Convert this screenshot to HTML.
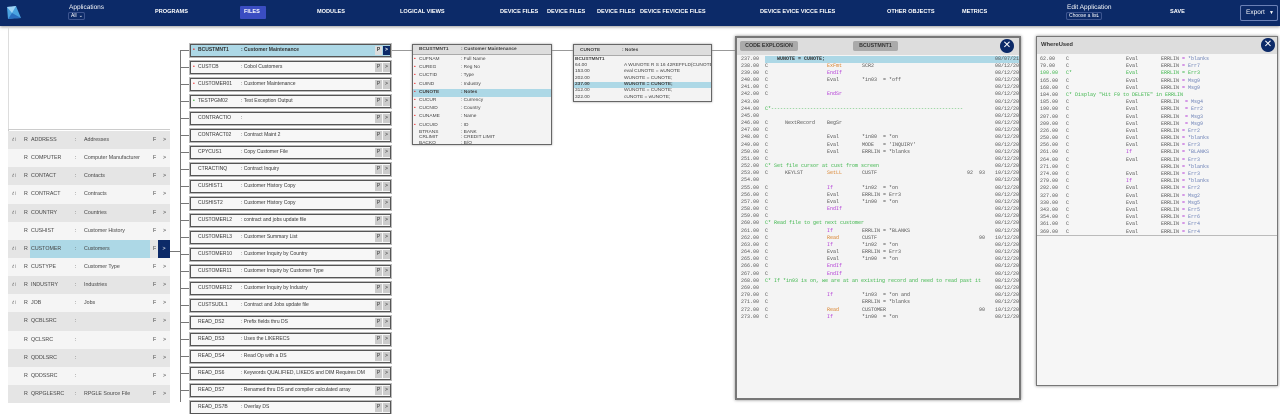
<!DOCTYPE html>
<html><head><meta charset="utf-8"><style>
*{margin:0;padding:0;box-sizing:border-box}
body{width:1280px;height:402px;overflow:hidden;background:#fff;font-family:"Liberation Sans",sans-serif;position:relative;color:#333}
.a{position:absolute}
#nav{left:0;top:0;width:1280px;height:26px;background:#0c2a68;box-shadow:0 1px 3px rgba(0,0,0,.4)}
.ni{position:absolute;top:9px;color:#fff;font-size:5.6px;font-weight:bold;white-space:nowrap}
.sel{position:absolute;border:1px solid #3d5590;border-radius:2px;color:#fff;font-size:5px;height:8px;line-height:7px;padding-left:2px}
.lt{left:8px;width:162px;height:18.14px;font-size:5.3px;line-height:18px;color:#444}
.lt span{position:absolute}
.bx{left:190px;width:201px;height:13px;border:1px solid #555;box-shadow:0 0 0 1px #bbb;background:#f7f7f7;font-size:5px;line-height:11px;color:#333}
.bx span{position:absolute}
.pc{position:absolute;top:1px;width:7px;height:9px;background:#ccc;text-align:center;line-height:9px;font-size:5px}
.hl{position:absolute;left:181px;width:9px;height:1px;background:#777}
.fr{position:absolute;left:0;width:138px;height:8.2px;font-size:4.8px;line-height:8.2px;color:#444}
.fr span{position:absolute}
.code{font-family:"Liberation Mono",monospace;font-size:5px;color:#555}
.L{position:relative;height:7.18px;line-height:7.18px;white-space:nowrap;padding-left:4px}
.L i{display:inline-block;font-style:normal;vertical-align:top}
.L i:nth-of-type(1){width:24px}.L i:nth-of-type(2){width:20px}.L i:nth-of-type(3){width:42px}.L i:nth-of-type(4){width:35px}.L i:nth-of-type(5){width:105px}.L i:nth-of-type(6){width:28px}
.d{position:absolute;left:258px;top:0}
.W{position:relative;height:7.2px;line-height:7.2px;white-space:nowrap;padding-left:3px}
.W i{display:inline-block;font-style:normal;vertical-align:top}
.W i:nth-of-type(1){width:26px}.W i:nth-of-type(2){width:60px}.W i:nth-of-type(3){width:35px}
.o{color:#d9822b}.p{color:#b23ad6}.g{color:#3cb54a}.b{color:#6a7fb5}
b{font-weight:normal}
</style></head><body>
<div id="nav" class="a">
<svg class="a" style="left:6px;top:5px" width="16" height="15" viewBox="0 0 16 15"><path d="M1 2 L10 1 L15 13 L2 14 Z" fill="#4aa3e0"/><path d="M1 2 L10 1 L6 8 Z" fill="#9fd4f5"/><path d="M6 8 L15 13 L2 14 Z" fill="#2a6fc0"/></svg>
<div class="a" style="left:69px;top:4px;color:#fff;font-size:6.5px">Applications</div>
<div class="sel" style="left:68px;top:12px;width:17px">All <span style="position:absolute;right:1px">⌄</span></div>
<div class="ni" style="left:155px">PROGRAMS</div>
<div class="a" style="left:240px;top:6px;width:26px;height:13px;background:#3a4dc2;border-radius:1px"></div>
<div class="ni" style="left:244px">FILES</div>
<div class="ni" style="left:317px">MODULES</div>
<div class="ni" style="left:400px">LOGICAL VIEWS</div>
<div class="ni" style="left:500px">DEVICE FILES</div>
<div class="ni" style="left:547px">DEVICE FILES</div>
<div class="ni" style="left:597px">DEVICE FILES</div>
<div class="ni" style="left:640px">DEVICE FEVICICE FILES</div>
<div class="ni" style="left:760px">DEVICE EVICE VICCE FILES</div>
<div class="ni" style="left:887px">OTHER OBJECTS</div>
<div class="ni" style="left:962px">METRICS</div>
<div class="a" style="left:1067px;top:4px;color:#fff;font-size:6.5px">Edit Application</div>
<div class="sel" style="left:1066px;top:12px;width:36px">Choose a list <span style="position:absolute;right:1px">⌄</span></div>
<div class="ni" style="left:1170px">SAVE</div>
<div class="a" style="left:1240px;top:5px;width:38px;height:16px;border:1px solid #6b80b5;border-radius:2px;color:#fff;font-size:6.5px;line-height:14px;padding-left:5px">Export <span style="position:absolute;right:3px;font-size:5px">▼</span></div>
</div>
<div class="a" style="left:8px;top:28px;width:1px;height:374px;background:#ddd"></div>

<!-- left table -->
<div class="a" style="left:8px;top:129px;width:162px;height:273px;border-left:1px solid #ccc;border-top:1px solid #ccc"></div>
<div class="a lt" style="top:131px;background:#e5e5e5"><span style="left:4px">⛙</span><span style="left:16px">R</span><span style="left:23px">ADDRESS</span><span style="left:67px">:</span><span style="left:76px">Addresses</span><span style="left:145px">F</span><span style="left:155px">&gt;</span></div>
<div class="a lt" style="top:149.14px;background:#f5f5f5"><span style="left:16px">R</span><span style="left:23px">COMPUTER</span><span style="left:67px">:</span><span style="left:76px">Computer Manufacturer</span><span style="left:145px">F</span><span style="left:155px">&gt;</span></div>
<div class="a lt" style="top:167.28px;background:#e5e5e5"><span style="left:4px">⛙</span><span style="left:16px">R</span><span style="left:23px">CONTACT</span><span style="left:67px">:</span><span style="left:76px">Contacts</span><span style="left:145px">F</span><span style="left:155px">&gt;</span></div>
<div class="a lt" style="top:185.42px;background:#f5f5f5"><span style="left:4px">⛙</span><span style="left:16px">R</span><span style="left:23px">CONTRACT</span><span style="left:67px">:</span><span style="left:76px">Contracts</span><span style="left:145px">F</span><span style="left:155px">&gt;</span></div>
<div class="a lt" style="top:203.56px;background:#e5e5e5"><span style="left:4px">⛙</span><span style="left:16px">R</span><span style="left:23px">COUNTRY</span><span style="left:67px">:</span><span style="left:76px">Countries</span><span style="left:145px">F</span><span style="left:155px">&gt;</span></div>
<div class="a lt" style="top:221.7px;background:#f5f5f5"><span style="left:16px">R</span><span style="left:23px">CUSHIST</span><span style="left:67px">:</span><span style="left:76px">Customer History</span><span style="left:145px">F</span><span style="left:155px">&gt;</span></div>
<div class="a lt" style="top:239.84px;background:#e5e5e5"><span style="left:22px;width:120px;height:18px;background:#add8e6"></span><span style="left:4px">⛙</span><span style="left:16px">R</span><span style="left:23px">CUSTOMER</span><span style="left:67px">:</span><span style="left:76px">Customers</span><span style="left:145px">F</span><span style="left:150px;width:12px;height:18px;background:#0c2a68;color:#fff;text-align:center">&gt;</span></div>
<div class="a lt" style="top:257.98px;background:#f5f5f5"><span style="left:4px">⛙</span><span style="left:16px">R</span><span style="left:23px">CUSTYPE</span><span style="left:67px">:</span><span style="left:76px">Customer Type</span><span style="left:145px">F</span><span style="left:155px">&gt;</span></div>
<div class="a lt" style="top:276.12px;background:#e5e5e5"><span style="left:4px">⛙</span><span style="left:16px">R</span><span style="left:23px">INDUSTRY</span><span style="left:67px">:</span><span style="left:76px">Industries</span><span style="left:145px">F</span><span style="left:155px">&gt;</span></div>
<div class="a lt" style="top:294.26px;background:#f5f5f5"><span style="left:4px">⛙</span><span style="left:16px">R</span><span style="left:23px">JOB</span><span style="left:67px">:</span><span style="left:76px">Jobs</span><span style="left:145px">F</span><span style="left:155px">&gt;</span></div>
<div class="a lt" style="top:312.4px;background:#e5e5e5"><span style="left:16px">R</span><span style="left:23px">QCBLSRC</span><span style="left:67px">:</span><span style="left:145px">F</span><span style="left:155px">&gt;</span></div>
<div class="a lt" style="top:330.54px;background:#f5f5f5"><span style="left:16px">R</span><span style="left:23px">QCLSRC</span><span style="left:67px">:</span><span style="left:145px">F</span><span style="left:155px">&gt;</span></div>
<div class="a lt" style="top:348.68px;background:#e5e5e5"><span style="left:16px">R</span><span style="left:23px">QDDLSRC</span><span style="left:67px">:</span><span style="left:145px">F</span><span style="left:155px">&gt;</span></div>
<div class="a lt" style="top:366.82px;background:#f5f5f5"><span style="left:16px">R</span><span style="left:23px">QDDSSRC</span><span style="left:67px">:</span><span style="left:145px">F</span><span style="left:155px">&gt;</span></div>
<div class="a lt" style="top:384.96px;background:#e5e5e5"><span style="left:16px">R</span><span style="left:23px">QRPGLESRC</span><span style="left:67px">:</span><span style="left:76px">RPGLE Source File</span><span style="left:145px">F</span><span style="left:155px">&gt;</span></div>

<!-- tree lines -->
<div class="a" style="left:170px;top:251px;width:11px;height:1px;background:#777"></div>
<div class="a" style="left:180px;top:50px;width:1px;height:352px;background:#777"></div>
<div class="hl" style="top:50px"></div><div class="hl" style="top:67px"></div><div class="hl" style="top:84px"></div><div class="hl" style="top:101px"></div><div class="hl" style="top:118px"></div><div class="hl" style="top:135px"></div><div class="hl" style="top:152px"></div><div class="hl" style="top:169px"></div><div class="hl" style="top:186px"></div><div class="hl" style="top:203px"></div><div class="hl" style="top:220px"></div><div class="hl" style="top:237px"></div><div class="hl" style="top:254px"></div><div class="hl" style="top:271px"></div><div class="hl" style="top:288px"></div><div class="hl" style="top:305px"></div><div class="hl" style="top:322px"></div><div class="hl" style="top:339px"></div><div class="hl" style="top:356px"></div><div class="hl" style="top:373px"></div><div class="hl" style="top:390px"></div>
<div class="a" style="left:391px;top:50px;width:21px;height:1px;background:#999"></div>
<div class="a" style="left:552px;top:50px;width:21px;height:1px;background:#999"></div>
<div class="a" style="left:712px;top:50px;width:23px;height:1px;background:#999"></div>

<!-- middle boxes -->
<div class="a bx" style="top:44px;background:#add8e6;font-weight:bold"><span style="left:2px;color:#e22">•</span><span style="left:7px">BCUSTMNT1</span><span style="left:50px">: Customer Maintenance</span><span class="pc" style="left:184px;background:#ddd">P</span><span class="pc" style="left:192px;background:#0c2a68;color:#fff">&gt;</span></div>
<div class="a bx" style="top:61px"><span style="left:2px;color:#e22">•</span><span style="left:7px">CUSTCB</span><span style="left:50px">: Cobol Customers</span><span class="pc" style="left:184px">P</span><span class="pc" style="left:192px">&gt;</span></div>
<div class="a bx" style="top:78px"><span style="left:2px;color:#e22">•</span><span style="left:7px">CUSTOMER01</span><span style="left:50px">: Customer Maintenance</span><span class="pc" style="left:184px">P</span><span class="pc" style="left:192px">&gt;</span></div>
<div class="a bx" style="top:95px"><span style="left:2px;color:#2a2">•</span><span style="left:7px">TESTPGM02</span><span style="left:50px">: Test Exception Output</span><span class="pc" style="left:184px">P</span><span class="pc" style="left:192px">&gt;</span></div>
<div class="a bx" style="top:112px"><span style="left:7px">CONTRACTIO</span><span style="left:50px">:</span><span class="pc" style="left:184px">P</span><span class="pc" style="left:192px">&gt;</span></div>
<div class="a bx" style="top:129px"><span style="left:7px">CONTRACT02</span><span style="left:50px">: Contract Maint 2</span><span class="pc" style="left:184px">P</span><span class="pc" style="left:192px">&gt;</span></div>
<div class="a bx" style="top:146px"><span style="left:7px">CPYCUS1</span><span style="left:50px">: Copy Customer File</span><span class="pc" style="left:184px">P</span><span class="pc" style="left:192px">&gt;</span></div>
<div class="a bx" style="top:163px"><span style="left:7px">CTRACTINQ</span><span style="left:50px">: Contract Inquiry</span><span class="pc" style="left:184px">P</span><span class="pc" style="left:192px">&gt;</span></div>
<div class="a bx" style="top:180px"><span style="left:7px">CUSHIST1</span><span style="left:50px">: Customer History Copy</span><span class="pc" style="left:184px">P</span><span class="pc" style="left:192px">&gt;</span></div>
<div class="a bx" style="top:197px"><span style="left:7px">CUSHIST2</span><span style="left:50px">: Customer History Copy</span><span class="pc" style="left:184px">P</span><span class="pc" style="left:192px">&gt;</span></div>
<div class="a bx" style="top:214px"><span style="left:7px">CUSTOMERL2</span><span style="left:50px">: contract and jobs update file</span><span class="pc" style="left:184px">P</span><span class="pc" style="left:192px">&gt;</span></div>
<div class="a bx" style="top:231px"><span style="left:7px">CUSTOMERL3</span><span style="left:50px">: Customer Summary List</span><span class="pc" style="left:184px">P</span><span class="pc" style="left:192px">&gt;</span></div>
<div class="a bx" style="top:248px"><span style="left:7px">CUSTOMER10</span><span style="left:50px">: Customer Inquiry by Country</span><span class="pc" style="left:184px">P</span><span class="pc" style="left:192px">&gt;</span></div>
<div class="a bx" style="top:265px"><span style="left:7px">CUSTOMER11</span><span style="left:50px">: Customer Inquiry by Customer Type</span><span class="pc" style="left:184px">P</span><span class="pc" style="left:192px">&gt;</span></div>
<div class="a bx" style="top:282px"><span style="left:7px">CUSTOMER12</span><span style="left:50px">: Customer Inquiry by Industry</span><span class="pc" style="left:184px">P</span><span class="pc" style="left:192px">&gt;</span></div>
<div class="a bx" style="top:299px"><span style="left:7px">CUSTSUDL1</span><span style="left:50px">: Contract and Jobs update file</span><span class="pc" style="left:184px">P</span><span class="pc" style="left:192px">&gt;</span></div>
<div class="a bx" style="top:316px"><span style="left:7px">READ_DS2</span><span style="left:50px">: Prefix fields thru DS</span><span class="pc" style="left:184px">P</span><span class="pc" style="left:192px">&gt;</span></div>
<div class="a bx" style="top:333px"><span style="left:7px">READ_DS3</span><span style="left:50px">: Uses the LIKERECS</span><span class="pc" style="left:184px">P</span><span class="pc" style="left:192px">&gt;</span></div>
<div class="a bx" style="top:350px"><span style="left:7px">READ_DS4</span><span style="left:50px">: Read Op with a DS</span><span class="pc" style="left:184px">P</span><span class="pc" style="left:192px">&gt;</span></div>
<div class="a bx" style="top:367px"><span style="left:7px">READ_DS6</span><span style="left:50px">: Keywords QUALIFIED, LIKEDS and DIM Requires DM</span><span class="pc" style="left:184px">P</span><span class="pc" style="left:192px">&gt;</span></div>
<div class="a bx" style="top:384px"><span style="left:7px">READ_DS7</span><span style="left:50px">: Renamed thru DS and compiler calculated array</span><span class="pc" style="left:184px">P</span><span class="pc" style="left:192px">&gt;</span></div>
<div class="a bx" style="top:401px"><span style="left:7px">READ_DS7B</span><span style="left:50px">: Overlay DS</span><span class="pc" style="left:184px">P</span><span class="pc" style="left:192px">&gt;</span></div>

<!-- field panel -->
<div class="a" style="left:412px;top:44px;width:140px;height:101px;border:1px solid #666;background:#f3f3f3;overflow:hidden;box-shadow:0 0 2px #999">
<div class="fr" style="top:0;height:10px;line-height:10px;background:#ddd;font-weight:bold;border-bottom:1px solid #aaa"><span style="left:6px">BCUSTMNT1</span><span style="left:48px">: Customer Maintenance</span></div>
<div class="fr" style="top:11px"><span style="left:1px;color:#e22">•</span><span style="left:6px">CUFNAM</span><span style="left:48px">: Full Name</span></div>
<div class="fr" style="top:19.2px"><span style="left:1px;color:#e22">•</span><span style="left:6px">CUREG</span><span style="left:48px">: Reg No</span></div>
<div class="fr" style="top:27.4px"><span style="left:1px;color:#e22">•</span><span style="left:6px">CUCTID</span><span style="left:48px">: Type</span></div>
<div class="fr" style="top:35.6px"><span style="left:1px;color:#e22">•</span><span style="left:6px">CUIND</span><span style="left:48px">: Industry</span></div>
<div class="fr" style="top:43.8px;background:#add8e6;font-weight:bold"><span style="left:1px;color:#e22">•</span><span style="left:6px">CUNOTE</span><span style="left:48px">: Notes</span></div>
<div class="fr" style="top:52px"><span style="left:1px;color:#e22">•</span><span style="left:6px">CUCUR</span><span style="left:48px">: Currency</span></div>
<div class="fr" style="top:60.2px"><span style="left:1px;color:#e22">•</span><span style="left:6px">CUCNID</span><span style="left:48px">: Country</span></div>
<div class="fr" style="top:68.4px"><span style="left:1px;color:#e22">•</span><span style="left:6px">CUNAME</span><span style="left:48px">: Name</span></div>
<div class="fr" style="top:76.6px"><span style="left:1px;color:#e22">•</span><span style="left:6px">CUCUID</span><span style="left:48px">: ID</span></div>
<div class="fr" style="top:84.8px;line-height:6px"><span style="left:6px">BTRANS</span><span style="left:48px">: BANK</span></div>
<div class="fr" style="top:90px;line-height:6px"><span style="left:6px">CRLIMIT</span><span style="left:48px">: CREDIT LIMIT</span></div>
<div class="fr" style="top:95.5px;line-height:6px"><span style="left:6px">BACKO</span><span style="left:48px">: B/O</span></div>
</div>

<!-- notes panel -->
<div class="a" style="left:573px;top:44px;width:139px;height:58px;border:1px solid #666;background:#f3f3f3;overflow:hidden;box-shadow:0 0 2px #999">
<div class="fr" style="top:0;height:11px;line-height:11px;background:#ddd;font-weight:bold;border-bottom:1px solid #aaa"><span style="left:6px">CUNOTE</span><span style="left:48px">: Notes</span></div>
<div class="fr" style="top:11px;height:7px;line-height:7px;font-weight:bold"><span style="left:1px">BCUSTMNT1</span></div>
<div class="fr" style="top:18px;height:6.3px;line-height:6.3px"><span style="left:1px">64.00</span><span style="left:50px;white-space:nowrap">A WUNOTE R S 16 42REFFLD(CUNOTE</span></div>
<div class="fr" style="top:24.3px;height:6.3px;line-height:6.3px"><span style="left:1px">153.00</span><span style="left:50px">eval CUNOTE = wUNOTE</span></div>
<div class="fr" style="top:30.6px;height:6.3px;line-height:6.3px"><span style="left:1px">202.00</span><span style="left:50px">WUNOTE = CUNOTE;</span></div>
<div class="fr" style="top:36.9px;height:6.3px;line-height:6.3px;background:#add8e6;font-weight:bold"><span style="left:1px">237.00</span><span style="left:50px">WUNOTE = CUNOTE;</span></div>
<div class="fr" style="top:43.2px;height:6.3px;line-height:6.3px"><span style="left:1px">312.00</span><span style="left:50px">WUNOTE = CUNOTE;</span></div>
<div class="fr" style="top:49.5px;height:6.3px;line-height:6.3px"><span style="left:1px">322.00</span><span style="left:50px">cUNOTE = wUNOTE;</span></div>
</div>

<!-- code panel -->
<div class="a" style="left:735px;top:36px;width:286px;height:364px;border:2px solid #777;background:#f4f4f4;overflow:hidden;box-shadow:0 0 3px #888">
<div class="a" style="left:0;top:0;width:284px;height:17px;background:#ddd"></div>
<div class="a" style="left:3px;top:3px;width:58px;height:10px;background:#aaa;border-radius:2px;font-size:5.3px;font-weight:bold;line-height:10px;text-align:center;color:#333">CODE EXPLOSION</div>
<div class="a" style="left:116px;top:3px;width:45px;height:10px;background:#aaa;border-radius:2px;font-size:5.3px;font-weight:bold;line-height:10px;text-align:center;color:#333">BCUSTMNT1</div>
<div class="a" style="left:263px;top:1px;width:14px;height:14px;border-radius:50%;background:#0c2a68;color:#fff;font-size:10px;line-height:14px;text-align:center">✕</div>
<div class="a code" style="left:0;top:17.5px;width:284px">
<div class="L"><div class="a" style="left:28px;top:0;width:260px;height:7.18px;background:#add8e6"></div><i style="position:relative">237.00</i><i></i><i style="position:relative;font-weight:bold;color:#333;margin-left:-8px">WUNOTE = CUNOTE;</i><span class="d">08/07/21</span></div>
<div class="L"><i>238.00</i><i>C</i><i></i><i class="o">ExFmt</i><i>SCR2</i><span class="d">08/12/20</span></div>
<div class="L"><i>239.00</i><i>C</i><i></i><i class="p">EndIf</i><span class="d">08/12/20</span></div>
<div class="L"><i>240.00</i><i>C</i><i></i><i>Eval</i><i>*in03&nbsp; = *off</i><span class="d">08/12/20</span></div>
<div class="L"><i>241.00</i><i>C</i><span class="d">08/12/20</span></div>
<div class="L"><i>242.00</i><i>C</i><i></i><i class="p">EndSr</i><span class="d">08/12/20</span></div>
<div class="L"><i>243.00</i><span class="d">08/12/20</span></div>
<div class="L"><i>244.00</i><b class="g">C*----------------------------------------------------------------</b><span class="d">08/12/20</span></div>
<div class="L"><i>245.00</i><span class="d">08/12/20</span></div>
<div class="L"><i>246.00</i><i>C</i><i>NextRecord</i><i>BegSr</i><span class="d">08/12/20</span></div>
<div class="L"><i>247.00</i><i>C</i><span class="d">08/12/20</span></div>
<div class="L"><i>248.00</i><i>C</i><i></i><i>Eval</i><i>*in80&nbsp; = *on</i><span class="d">08/12/20</span></div>
<div class="L"><i>249.00</i><i>C</i><i></i><i>Eval</i><i>MODE&nbsp;&nbsp; = 'INQUIRY'</i><span class="d">08/12/20</span></div>
<div class="L"><i>250.00</i><i>C</i><i></i><i>Eval</i><i>ERRLIN = *blanks</i><span class="d">08/12/20</span></div>
<div class="L"><i>251.00</i><i>C</i><span class="d">08/12/20</span></div>
<div class="L"><i>252.00</i><b class="g">C* Set file cursor at cust from screen</b><span class="d">08/12/20</span></div>
<div class="L"><i>253.00</i><i>C</i><i>KEYLST</i><i class="o">SetLL</i><i>CUSTF</i><i>92&nbsp;&nbsp;93</i><span class="d">10/12/20</span></div>
<div class="L"><i>254.00</i><span class="d">08/12/20</span></div>
<div class="L"><i>255.00</i><i>C</i><i></i><i class="p">If</i><i>*in92&nbsp; = *on</i><span class="d">08/12/20</span></div>
<div class="L"><i>256.00</i><i>C</i><i></i><i>Eval</i><i>ERRLIN = Err3</i><span class="d">08/12/20</span></div>
<div class="L"><i>257.00</i><i>C</i><i></i><i>Eval</i><i>*in90&nbsp; = *on</i><span class="d">08/12/20</span></div>
<div class="L"><i>258.00</i><i>C</i><i></i><i class="p">EndIf</i><span class="d">08/12/20</span></div>
<div class="L"><i>259.00</i><i>C</i><span class="d">08/12/20</span></div>
<div class="L"><i>260.00</i><b class="g">C* Read file to get next customer</b><span class="d">08/12/20</span></div>
<div class="L"><i>261.00</i><i>C</i><i></i><i class="p">If</i><i>ERRLIN = *BLANKS</i><span class="d">08/12/20</span></div>
<div class="L"><i>262.00</i><i>C</i><i></i><i class="o">Read</i><i>CUSTF</i><i>&nbsp;&nbsp;&nbsp;&nbsp;90</i><span class="d">10/12/20</span></div>
<div class="L"><i>263.00</i><i>C</i><i></i><i class="p">If</i><i>*in92&nbsp; = *on</i><span class="d">08/12/20</span></div>
<div class="L"><i>264.00</i><i>C</i><i></i><i>Eval</i><i>ERRLIN = Err3</i><span class="d">08/12/20</span></div>
<div class="L"><i>265.00</i><i>C</i><i></i><i>Eval</i><i>*in90&nbsp; = *on</i><span class="d">08/12/20</span></div>
<div class="L"><i>266.00</i><i>C</i><i></i><i class="p">EndIf</i><span class="d">08/12/20</span></div>
<div class="L"><i>267.00</i><i>C</i><i></i><i class="p">EndIf</i><span class="d">08/12/20</span></div>
<div class="L"><i>268.00</i><b class="g">C* If *in93 is on, we are at an existing record and need to read past it</b><span class="d">08/12/20</span></div>
<div class="L"><i>269.00</i><span class="d">08/12/20</span></div>
<div class="L"><i>270.00</i><i>C</i><i></i><i class="p">If</i><i>*in93&nbsp; = *on and</i><span class="d">08/12/20</span></div>
<div class="L"><i>271.00</i><i>C</i><i></i><i></i><i>ERRLIN = *blanks</i><span class="d">08/12/20</span></div>
<div class="L"><i>272.00</i><i>C</i><i></i><i class="o">Read</i><i>CUSTOMER</i><i>&nbsp;&nbsp;&nbsp;&nbsp;90</i><span class="d">10/12/20</span></div>
<div class="L"><i>273.00</i><i>C</i><i></i><i class="p">If</i><i>*in90&nbsp; = *on</i><span class="d">08/12/20</span></div>
</div>
</div>

<!-- whereused panel -->
<div class="a" style="left:1036px;top:36px;width:242px;height:350px;border:1px solid #777;background:#f6f6f6;overflow:hidden;box-shadow:0 0 3px #888">
<div class="a" style="left:0;top:0;width:242px;height:17px;background:#ddd;font-size:5.8px;font-weight:bold;line-height:17px;padding-left:4px;color:#333">WhereUsed</div>
<div class="a" style="left:224px;top:1px;width:14px;height:14px;border-radius:50%;background:#0c2a68;color:#fff;font-size:10px;line-height:14px;text-align:center">✕</div>
<div class="a" style="left:0;top:198px;width:242px;height:1px;background:#bbb"></div>
<div class="a code" style="left:0;top:19px;width:240px">
<div class="W"><i>62.00</i><i>C</i><i>Eval</i>ERRLIN <span class="p">=</span> <span class="b">*blanks</span></div>
<div class="W"><i>79.00</i><i>C</i><i>Eval</i>ERRLIN <span class="p">=</span> <span class="b">Err7</span></div>
<div class="W g"><i>100.00</i><i>C*</i><i>Eval</i>ERRLIN = Err3</div>
<div class="W"><i>165.00</i><i>C</i><i>Eval</i>ERRLIN <span class="p">=</span> <span class="b">Msg9</span></div>
<div class="W"><i>168.00</i><i>C</i><i>Eval</i>ERRLIN <span class="p">=</span> <span class="b">Msg9</span></div>
<div class="W"><i>184.00</i><b class="g">C* Display "Hit F9 to DELETE" in ERRLIN</b></div>
<div class="W"><i>185.00</i><i>C</i><i>Eval</i>ERRLIN&nbsp; <span class="p">=</span> <span class="b">Msg4</span></div>
<div class="W"><i>190.00</i><i>C</i><i>Eval</i>ERRLIN&nbsp; <span class="p">=</span> <span class="b">Err2</span></div>
<div class="W"><i>207.00</i><i>C</i><i>Eval</i>ERRLIN&nbsp; <span class="p">=</span> <span class="b">Msg3</span></div>
<div class="W"><i>209.00</i><i>C</i><i>Eval</i>ERRLIN&nbsp; <span class="p">=</span> <span class="b">Msg9</span></div>
<div class="W"><i>226.00</i><i>C</i><i>Eval</i>ERRLIN <span class="p">=</span> <span class="b">Err2</span></div>
<div class="W"><i>250.00</i><i>C</i><i>Eval</i>ERRLIN <span class="p">=</span> <span class="b">*blanks</span></div>
<div class="W"><i>256.00</i><i>C</i><i>Eval</i>ERRLIN <span class="p">=</span> <span class="b">Err3</span></div>
<div class="W"><i>261.00</i><i>C</i><i class="p">If</i>ERRLIN <span class="p">=</span> <span class="b">*BLANKS</span></div>
<div class="W"><i>264.00</i><i>C</i><i>Eval</i>ERRLIN <span class="p">=</span> <span class="b">Err3</span></div>
<div class="W"><i>271.00</i><i>C</i><i></i>ERRLIN <span class="p">=</span> <span class="b">*blanks</span></div>
<div class="W"><i>274.00</i><i>C</i><i>Eval</i>ERRLIN <span class="p">=</span> <span class="b">Err3</span></div>
<div class="W"><i>279.00</i><i>C</i><i class="p">If</i>ERRLIN <span class="p">=</span> <span class="b">*blanks</span></div>
<div class="W"><i>292.00</i><i>C</i><i>Eval</i>ERRLIN <span class="p">=</span> <span class="b">Err2</span></div>
<div class="W"><i>327.00</i><i>C</i><i>Eval</i>ERRLIN <span class="p">=</span> <span class="b">Msg2</span></div>
<div class="W"><i>330.00</i><i>C</i><i>Eval</i>ERRLIN <span class="p">=</span> <span class="b">Msg5</span></div>
<div class="W"><i>343.00</i><i>C</i><i>Eval</i>ERRLIN <span class="p">=</span> <span class="b">Err5</span></div>
<div class="W"><i>354.00</i><i>C</i><i>Eval</i>ERRLIN <span class="p">=</span> <span class="b">Err6</span></div>
<div class="W"><i>361.00</i><i>C</i><i>Eval</i>ERRLIN <span class="p">=</span> <span class="b">Err4</span></div>
<div class="W"><i>369.00</i><i>C</i><i>Eval</i>ERRLIN <span class="p">=</span> <span class="b">Err4</span></div>
</div>
</div>
</body></html>
